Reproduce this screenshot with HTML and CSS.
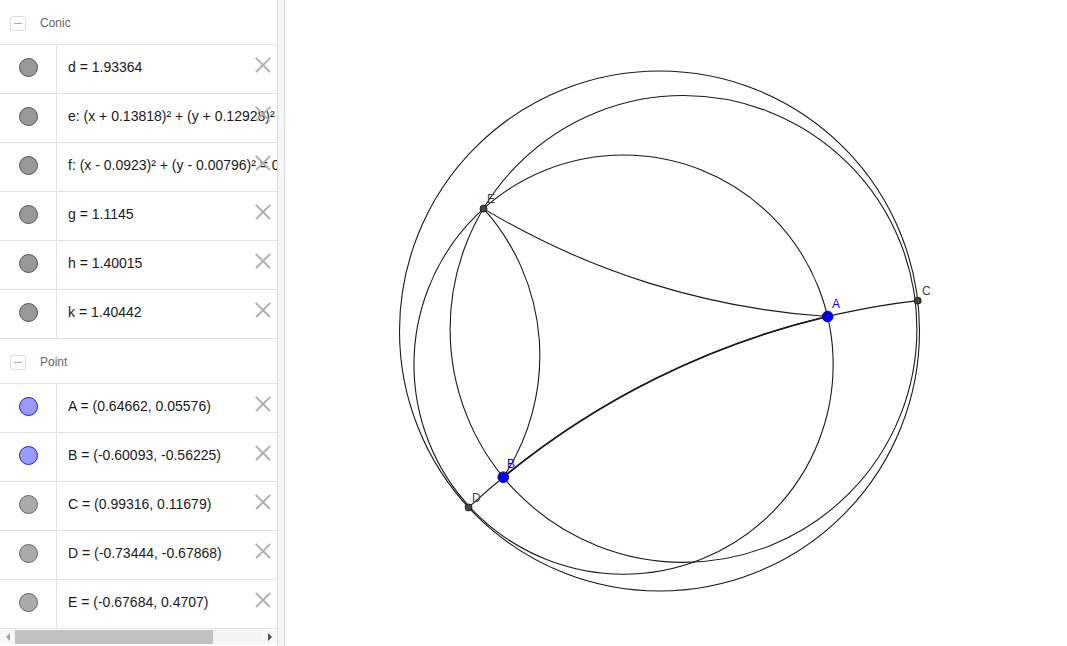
FILE: index.html
```html
<!DOCTYPE html>
<html>
<head>
<meta charset="utf-8">
<title>GeoGebra</title>
<link rel="stylesheet" href="styles.css">
</head>
<body>
<div class="app">
  <div class="algebra">
    <div class="group-head"><span class="toggle"></span><span>Conic</span></div>
    <div class="row"><div class="marker-cell"><span class="marker conic"></span></div><div class="value">d = 1.93364</div><span class="delete"></span></div>
    <div class="row"><div class="marker-cell"><span class="marker conic"></span></div><div class="value">e: (x + 0.13818)² + (y + 0.12928)² = 0.65015</div><span class="delete"></span></div>
    <div class="row"><div class="marker-cell"><span class="marker conic"></span></div><div class="value">f: (x - 0.0923)² + (y - 0.00796)² = 0.80571</div><span class="delete"></span></div>
    <div class="row"><div class="marker-cell"><span class="marker conic"></span></div><div class="value">g = 1.1145</div><span class="delete"></span></div>
    <div class="row"><div class="marker-cell"><span class="marker conic"></span></div><div class="value">h = 1.40015</div><span class="delete"></span></div>
    <div class="row"><div class="marker-cell"><span class="marker conic"></span></div><div class="value">k = 1.40442</div><span class="delete"></span></div>
    <div class="group-head"><span class="toggle"></span><span>Point</span></div>
    <div class="row"><div class="marker-cell"><span class="marker free"></span></div><div class="value">A = (0.64662, 0.05576)</div><span class="delete"></span></div>
    <div class="row"><div class="marker-cell"><span class="marker free"></span></div><div class="value">B = (-0.60093, -0.56225)</div><span class="delete"></span></div>
    <div class="row"><div class="marker-cell"><span class="marker dep"></span></div><div class="value">C = (0.99316, 0.11679)</div><span class="delete"></span></div>
    <div class="row"><div class="marker-cell"><span class="marker dep"></span></div><div class="value">D = (-0.73444, -0.67868)</div><span class="delete"></span></div>
    <div class="row"><div class="marker-cell"><span class="marker dep"></span></div><div class="value">E = (-0.67684, 0.4707)</div><span class="delete"></span></div>
    <div class="hscroll"><span class="arrow-left"></span><span class="thumb"></span><span class="track"></span><span class="arrow-right"></span></div>
  </div>
  <div class="splitter"></div>
  <div class="graphics">
    <svg class="canvas" width="782" height="646" viewBox="285 0 782 646" xmlns="http://www.w3.org/2000/svg">
      <g fill="none" stroke="#1a1a1a" stroke-width="1.1">
        <circle cx="659.5" cy="331" r="260"/>
        <circle cx="623.57" cy="364.61" r="209.6"/>
        <circle cx="683.5" cy="328.93" r="233.4"/>
        <path d="M468.55 507.46 A799.4 799.4 0 0 1 917.72 300.63"/>
        <path d="M503.26 477.19 A799.4 799.4 0 0 1 827.62 316.50" stroke-width="1.7"/>
        <path d="M483.52 208.62 A765.4 765.4 0 0 0 827.62 316.50"/>
        <path d="M483.52 208.62 A220.1 220.1 0 0 1 503.26 477.19"/>
      </g>
      <g stroke="#111" stroke-width="0.8">
        <circle cx="917.72" cy="300.63" r="3.5" fill="#444"/>
        <circle cx="468.55" cy="507.46" r="3.5" fill="#444"/>
        <circle cx="483.52" cy="208.62" r="3.5" fill="#444"/>
      </g>
      <g stroke="#00008a" stroke-width="1">
        <circle cx="827.62" cy="316.5" r="5.3" fill="#0000ff"/>
        <circle cx="503.26" cy="477.19" r="5.3" fill="#0000ff"/>
      </g>
      <g class="labels">
        <text x="832" y="308" class="lbl blue">A</text>
        <text x="507" y="468" class="lbl blue">B</text>
        <text x="922" y="295" class="lbl gray">C</text>
        <text x="472" y="502" class="lbl gray">D</text>
        <text x="487" y="203" class="lbl gray">E</text>
      </g>
    </svg>
  </div>
</div>
</body>
</html>
```
FILE: styles.css
```css
* { box-sizing: border-box; }
body {
  margin: 0;
  background: #fff;
  font-family: "Liberation Sans", Arial, sans-serif;
}
.app {
  display: flex;
  width: 1067px;
  height: 646px;
  overflow: hidden;
}
.algebra {
  width: 277px;
  flex: none;
  display: flex;
  flex-direction: column;
  background: #fff;
}
.group-head {
  height: 45px;
  flex: none;
  border-bottom: 1px solid #e3e3e3;
  display: flex;
  align-items: center;
  padding-left: 10px;
  padding-top: 2px;
  gap: 14px;
  font-size: 12px;
  color: #666;
}
.toggle {
  width: 16px;
  height: 15px;
  border: 1px solid #dcdcdc;
  border-radius: 3px;
  display: flex;
  align-items: center;
  justify-content: center;
}
.toggle::before {
  content: "";
  width: 8px;
  height: 1px;
  background: #aaa;
}
.row {
  height: 49px;
  flex: none;
  border-bottom: 1px solid #e3e3e3;
  display: flex;
  position: relative;
}
.marker-cell {
  width: 57px;
  flex: none;
  border-right: 1px solid #e3e3e3;
  display: flex;
  align-items: center;
  justify-content: center;
  padding-bottom: 4px;
}
.marker {
  width: 19px;
  height: 19px;
  border-radius: 50%;
  border: 1px solid #555;
  background: #999;
}
.marker.free {
  background: #9999ff;
  border-color: #1a1aee;
}
.marker.dep {
  background: #aaaaaa;
  border-color: #666;
}
.value {
  flex: 1;
  min-width: 0;
  padding-left: 11px;
  padding-bottom: 4px;
  display: flex;
  align-items: center;
  font-size: 14px;
  color: #1a1a1a;
  white-space: nowrap;
  overflow: hidden;
}
.delete {
  position: absolute;
  right: 6px;
  top: 12px;
  width: 16px;
  height: 16px;
}
.delete::before,
.delete::after {
  content: "";
  position: absolute;
  left: -2px;
  top: 7px;
  width: 20px;
  height: 1.5px;
  background: #b0b0b0;
  transform: rotate(45deg);
}
.delete::after {
  transform: rotate(-45deg);
}
.hscroll {
  height: 14px;
  margin-top: 1px;
  flex: none;
  display: flex;
  background: #f7f7f7;
}
.arrow-left {
  width: 15px;
  display: flex;
  align-items: center;
  justify-content: center;
}
.arrow-left::before {
  content: "";
  border-right: 4px solid #a0a0a0;
  border-top: 4px solid transparent;
  border-bottom: 4px solid transparent;
}
.thumb {
  width: 198px;
  background: #c1c1c1;
}
.track {
  flex: 1;
  background: #f4f4f4;
}
.arrow-right {
  width: 14px;
  display: flex;
  align-items: center;
  justify-content: center;
}
.arrow-right::before {
  content: "";
  border-left: 4px solid #505050;
  border-top: 4px solid transparent;
  border-bottom: 4px solid transparent;
}
.splitter {
  width: 8px;
  flex: none;
  border-left: 1px solid #dadada;
  border-right: 1px solid #dadada;
  background: #f6f6f6;
}
.graphics {
  flex: 1;
  background: #fff;
}
.canvas {
  display: block;
}
.lbl {
  font-family: "Liberation Sans", Arial, sans-serif;
  font-size: 12px;
}
.lbl.blue { fill: #0000ff; }
.lbl.gray { fill: #444; }
```
